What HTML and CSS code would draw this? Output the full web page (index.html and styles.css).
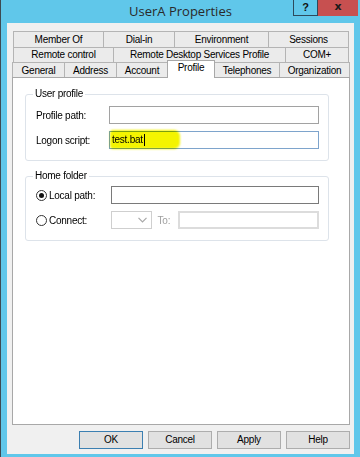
FILE: index.html
```html
<!DOCTYPE html>
<html>
<head>
<meta charset="utf-8">
<link rel="stylesheet" href="styles.css">
</head>
<body>
<div class="window">
  <div class="titlebar">
    <div></div>
    <div class="title">UserA Properties</div>
    <div class="caption-btns">
      <div class="cap-help">?</div>
      <div class="cap-close">x</div>
    </div>
  </div>
  <div class="client">
    <div class="tabs">
      <div class="tabrow r1">
        <div class="tab t-member">Member Of</div>
        <div class="tab t-dialin">Dial-in</div>
        <div class="tab t-env">Environment</div>
        <div class="tab t-sessions">Sessions</div>
      </div>
      <div class="tabrow r2">
        <div class="tab t-remote">Remote control</div>
        <div class="tab t-rdsp">Remote Desktop Services Profile</div>
        <div class="tab t-com">COM+</div>
      </div>
      <div class="tabrow r3">
        <div class="tab t-general">General</div>
        <div class="tab t-address">Address</div>
        <div class="tab t-account">Account</div>
        <div class="tab t-profile selected">Profile</div>
        <div class="tab t-tel">Telephones</div>
        <div class="tab t-org">Organization</div>
      </div>
    </div>
    <div class="panel">
      <fieldset class="group g-profile">
        <legend>User profile</legend>
        <div class="row first">
          <span class="label">Profile path:</span>
          <div class="input"></div>
        </div>
        <div class="row hl-row">
          <span class="label">Logon script:</span>
          <div class="input focused">test.bat<span class="caret"></span></div>
          <span class="highlight"></span>
        </div>
      </fieldset>
      <fieldset class="group g-home">
        <legend>Home folder</legend>
        <div class="row first">
          <span class="radio checked"></span>
          <span class="rlabel">Local path:</span>
          <div class="input dark"></div>
        </div>
        <div class="row">
          <span class="radio"></span>
          <span class="rlabel">Connect:</span>
          <div class="combo disabled">
            <svg class="chev" width="9" height="6" viewBox="0 0 9 6"><polyline points="0.5,0.8 4.5,4.8 8.5,0.8" fill="none" stroke="#a8a8a8" stroke-width="1.2"/></svg>
          </div>
          <span class="to">To:</span>
          <div class="input disabled wide"></div>
        </div>
      </fieldset>
    </div>
    <div class="buttons">
      <div class="btn default">OK</div>
      <div class="btn">Cancel</div>
      <div class="btn">Apply</div>
      <div class="btn">Help</div>
    </div>
  </div>
</div>
</body>
</html>
```

FILE: styles.css
```css
* { box-sizing: border-box; }
html, body { margin: 0; padding: 0; }
body {
  width: 360px;
  height: 457px;
  overflow: hidden;
  font-family: "Liberation Sans", Arial, sans-serif;
  font-size: 10px;
  letter-spacing: -0.25px;
  color: #000;
}
.window {
  width: 360px;
  height: 457px;
  background: #60c7ea;
  border-left: 1px solid #3d4a52;
  display: flex;
  flex-direction: column;
}
.titlebar {
  height: 23px;
  display: grid;
  grid-template-columns: 1fr auto 1fr;
  align-items: start;
}
.title {
  font-family: "Open Sans", "Noto Sans", sans-serif;
  font-size: 13px;
  letter-spacing: 0;
  color: #2a2a2a;
  line-height: 22px;
}
.caption-btns {
  justify-self: end;
  display: flex;
  margin-right: 2px;
}
.cap-help {
  width: 25px;
  height: 16px;
  border: 1px solid #2d4a5c;
  border-top: none;
  font-family: "Liberation Sans", sans-serif;
  font-weight: bold;
  font-size: 11px;
  line-height: 14px;
  text-align: center;
  color: #111;
}
.cap-close {
  width: 40px;
  height: 16px;
  background: #c75050;
  font-family: "DejaVu Sans", sans-serif;
  font-weight: bold;
  font-size: 11px;
  line-height: 14px;
  text-align: center;
  color: #1a1a1a;
}
.client {
  flex: 1;
  margin: 0 6px 3px 6px;
  background: #f0f0f0;
  padding: 8px 4px 5px 5px;
  display: flex;
  flex-direction: column;
}
.tabs { display: flex; flex-direction: column; }
.tabrow { display: flex; }
.r1, .r2 { margin: 0 1px; }
.r2, .r3 { margin-top: -1px; }
.tab {
  border: 1px solid #b4b4b4;
  background: #ebebeb;
  text-align: center;
  margin-left: -1px;
  white-space: nowrap;
}
.tab:first-child { margin-left: 0; }
.r1 .tab { height: 17px; line-height: 15px; }
.r2 .tab { height: 16px; line-height: 14px; }
.r3 { height: 15px; }
.r3 .tab { height: 15px; line-height: 15px; border-bottom: none; }
.r3 .tab.selected {
  height: 18px;
  margin-top: -2px;
  background: #fff;
  position: relative;
  z-index: 2;
  line-height: 14px;
  border-color: #a8a8a8;
}
.t-member { width: 91px; }
.t-dialin { width: 72px; }
.t-env { width: 95px; }
.t-sessions { width: 81px; }
.t-remote { width: 101px; }
.t-rdsp { width: 173px; }
.t-com { width: 64px; }
.t-general { width: 53px; }
.t-address { width: 53px; }
.t-account { width: 52px; }
.t-profile { width: 48px; }
.t-tel { width: 66px; }
.t-org { width: 71px; }

.panel {
  height: 348px;
  background: #fff;
  border: 1px solid #a8a8a8;
  padding: 10px 20px 0 12px;
  position: relative;
  z-index: 1;
}
.group {
  margin: 0;
  padding: 0 9px 11px 10px;
  border: 1px solid #dde3ea;
  border-radius: 3px;
  min-width: 0;
}
.group legend {
  padding: 0 2px;
  margin-left: -3px;
  line-height: 12px;
  height: 12px;
}
.g-home { margin-top: 9px; }
.row {
  display: flex;
  align-items: center;
  height: 18px;
  margin-top: 7px;
  position: relative;
}
.g-profile .row.first { margin-top: 6px; }
.g-home .row.first { margin-top: 4px; }
.label { width: 73px; flex: none; }
.input {
  width: 210px;
  height: 18px;
  border: 1px solid #a2a2a2;
  background: #fff;
  padding-left: 2px;
  line-height: 16px;
  display: flex;
  align-items: center;
}
.input.focused { border-color: #7ea4cc; position: relative; }
.input.dark { border-color: #7a7a7a; }
.input.disabled { border: 2px solid #dcdcdc; }
.input.wide { width: 143px; }
.caret {
  display: inline-block;
  width: 1px;
  height: 12px;
  background: #000;
  margin-left: 1px;
}
.highlight {
  position: absolute;
  left: 74px;
  top: -1px;
  width: 70px;
  height: 19px;
  background: #f4f400;
  border-radius: 3px 6px 6px 3px;
  mix-blend-mode: multiply;
  filter: blur(0.8px);
}
.radio {
  width: 11px;
  height: 11px;
  border: 1px solid #333;
  border-radius: 50%;
  background: #fff;
  flex: none;
  position: relative;
  display: flex;
  align-items: center;
  justify-content: center;
}
.radio.checked::after {
  content: "";
  width: 5px;
  height: 5px;
  border-radius: 50%;
  background: #111;
}
.rlabel { width: 62px; margin-left: 2px; flex: none; }
.combo {
  width: 41px;
  height: 18px;
  border: 1px solid #cfcfcf;
  background: #fff;
  display: flex;
  align-items: center;
  justify-content: flex-end;
  padding-right: 4px;
}
.to {
  color: #a0a0a0;
  margin-left: 6px;
  width: 20px;
  flex: none;
}
.buttons {
  display: flex;
  justify-content: flex-end;
  gap: 5px;
  margin-top: 6px;
}
.btn {
  width: 64px;
  height: 18px;
  border: 1px solid #adadad;
  background: #e1e1e1;
  text-align: center;
  line-height: 16px;
}
.btn.default { border-color: #3c7fb1; }
```
